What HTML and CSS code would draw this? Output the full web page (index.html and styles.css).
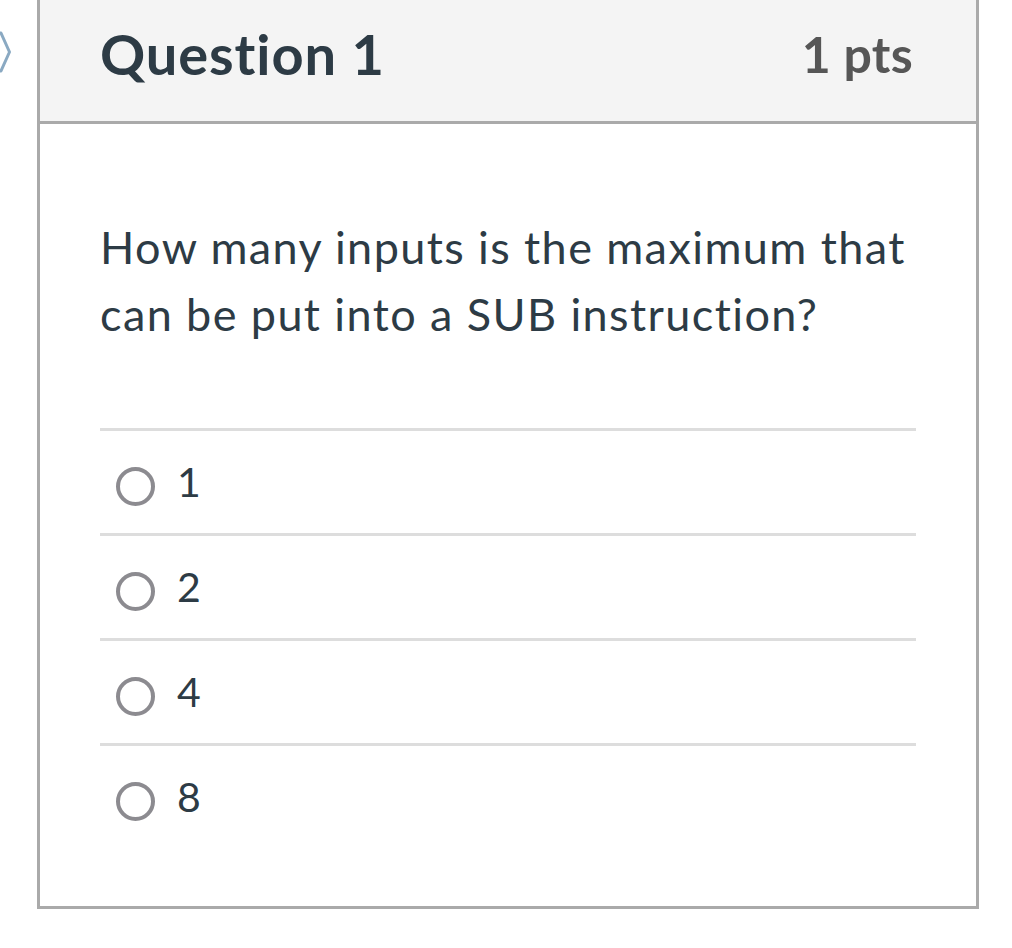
FILE: index.html
```html
<!DOCTYPE html>
<html lang="en">
<head>
<meta charset="utf-8">
<title>Question 1</title>
<link rel="stylesheet" href="styles.css">
</head>
<body>
<svg class="flag" width="14" height="44" viewBox="0 0 14 44" aria-hidden="true">
  <path d="M-14 2 L1 2 L9.5 21 L1 40 L-14 40" fill="none" stroke="#8aa9c2" stroke-width="3" stroke-linejoin="round"/>
</svg>
<div class="card">
  <div class="header">
    <h2 class="title">Question 1</h2>
    <span class="pts">1 pts</span>
  </div>
  <div class="body">
    <p class="question">How many inputs is the maximum that can be put into a SUB instruction?</p>
    <ul class="answers">
      <li class="answer"><span class="radio"></span><span class="label">1</span></li>
      <li class="answer"><span class="radio"></span><span class="label">2</span></li>
      <li class="answer"><span class="radio"></span><span class="label">4</span></li>
      <li class="answer"><span class="radio"></span><span class="label">8</span></li>
    </ul>
  </div>
</div>
</body>
</html>
```
FILE: styles.css
```css
html, body {
  margin: 0;
  padding: 0;
  background: #ffffff;
}

body {
  font-family: Lato, "Noto Sans", sans-serif;
  color: #2d3b45;
  position: relative;
  width: 1012px;
  height: 948px;
  overflow: hidden;
}

.flag {
  position: absolute;
  left: 0;
  top: 31px;
}

.card {
  box-sizing: border-box;
  margin-left: 37px;
  width: 942px;
  border: 3px solid #aaaaaa;
  border-top: 0;
}

.header {
  box-sizing: border-box;
  height: 124px;
  background: #f4f4f4;
  border-bottom: 3px solid #aaaaaa;
  display: flex;
  align-items: center;
  justify-content: space-between;
  padding: 0 63px 14px 60px;
}

.title {
  margin: 0;
  font-size: 56px;
  font-weight: 700;
  color: #2d3b45;
  letter-spacing: 0.9px;
}

.pts {
  font-size: 50px;
  font-weight: 700;
  color: #565656;
  letter-spacing: 0.3px;
}

.body {
  padding: 90px 60px 58px 60px;
}

.question {
  margin: 0 0 80px 0;
  font-size: 45px;
  line-height: 67px;
  letter-spacing: 1.4px;
  color: #2d3b45;
}

.answers {
  list-style: none;
  margin: 0;
  padding: 0;
}

.answer {
  box-sizing: border-box;
  height: 105px;
  border-top: 3px solid #dddddd;
  display: flex;
  align-items: center;
  padding-left: 16px;
  padding-top: 8px;
}

.radio {
  box-sizing: border-box;
  width: 39px;
  height: 39px;
  border: 4px solid #8c8b90;
  border-radius: 50%;
  flex: none;
}

.label {
  margin-left: 22px;
  font-size: 41px;
  line-height: 1;
  color: #2d3b45;
  margin-top: -10px;
}
```
